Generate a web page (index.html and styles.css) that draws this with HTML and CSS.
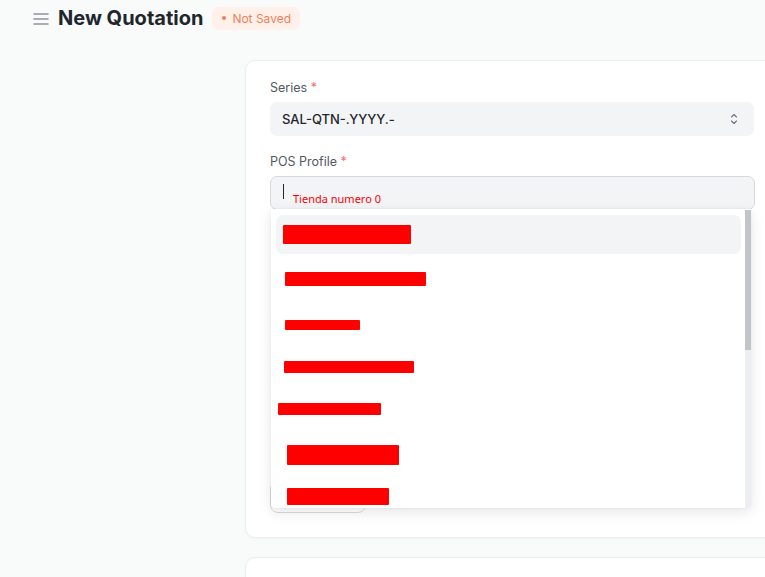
FILE: index.html
```html
<!DOCTYPE html>
<html lang="en">

<head>
    <meta charset="UTF-8">
    <meta name="viewport" content="width=device-width, initial-scale=1.0">
    <title>New Quotation</title>
    <link rel="stylesheet" href="styles.css">
</head>

<body>
    <header class="page-head">
        <svg class="menu-icon" width="16" height="12" viewBox="0 0 16 12">
            <path d="M1 1h14M1 6h14M1 11h14" stroke="#8d949c" stroke-width="1.6" stroke-linecap="round" />
        </svg>
        <h1 class="title">New Quotation</h1>
        <span class="badge"><span class="dot"></span>Not Saved</span>
    </header>

    <div class="page-body">
        <div class="sidebar"></div>
        <main class="main">
            <div class="card">
                <div class="form-group">
                    <label class="label">Series <span class="req">*</span></label>
                    <div class="select">
                        <span>SAL-QTN-.YYYY.-</span>
                        <svg width="10" height="14" viewBox="0 0 10 14">
                            <path d="M2.5 5l2.5-2.5L7.5 5M2.5 9l2.5 2.5L7.5 9" fill="none" stroke="#6b737b" stroke-width="1.1" stroke-linecap="round" stroke-linejoin="round" />
                        </svg>
                    </div>
                </div>

                <div class="form-group link-field">
                    <label class="label">POS Profile <span class="req">*</span></label>
                    <div class="input">
                        <span class="caret"></span>
                        <span class="hint">Tienda numero 0</span>
                    </div>

                    <ul class="dropdown">
                        <li class="item active"><span class="redact" style="width:128px;height:19px"></span></li>
                        <li class="item"><span class="redact" style="width:141px;height:14px;margin-left:2px"></span></li>
                        <li class="item"><span class="redact" style="width:75px;height:10px;margin-left:2px;margin-top:4px"></span></li>
                        <li class="item"><span class="redact" style="width:130px;height:12px;margin-left:1px"></span></li>
                        <li class="item"><span class="redact" style="width:103px;height:12px;margin-left:-5px;margin-top:-4px"></span></li>
                        <li class="item"><span class="redact" style="width:112px;height:20px;margin-left:4px"></span></li>
                        <li class="item"><span class="redact" style="width:102px;height:17px;margin-left:4px;margin-top:-4px"></span></li>
                        <div class="scroll-track"><div class="scroll-thumb"></div></div>
                    </ul>
                </div>

                <div class="hidden-btn"></div>
            </div>

            <div class="card next-card"></div>
        </main>
    </div>
</body>

</html>
```

FILE: styles.css
```css
body {
    margin: 0;
    font-family: Inter, 'Noto Sans', sans-serif;
    background-color: #f9fafa;
    color: #1f272e;
    overflow: hidden;
    height: 577px;
}

.page-head {
    display: flex;
    align-items: center;
    height: 36px;
    padding-left: 33px;
    padding-top: 0;
}

.menu-icon {
    margin-right: 9px;
    margin-top: 1px;
}

.title {
    margin: 0;
    font-size: 20px;
    font-weight: 700;
    color: #1f272e;
}

.badge {
    display: inline-flex;
    align-items: center;
    margin-left: 9px;
    height: 23px;
    padding: 0 9px 0 10px;
    border-radius: 7px;
    background-color: #fff1ea;
    color: #f0805a;
    font-size: 12px;
}

.dot {
    width: 4px;
    height: 4px;
    border-radius: 50%;
    background-color: #f0805a;
    margin-right: 6px;
}

.page-body {
    display: flex;
    padding-top: 24px;
}

.sidebar {
    flex: 0 0 245px;
}

.main {
    flex: 0 0 535px;
}

.card {
    background-color: white;
    border: 1px solid #ececec;
    border-radius: 10px;
    padding: 19px 25px 24px 24px;
    box-shadow: 0 1px 3px rgba(0, 0, 0, 0.03);
}

.next-card {
    margin-top: 19px;
    height: 60px;
}

.form-group {
    margin-bottom: 18px;
}

.label {
    display: block;
    font-size: 12.5px;
    line-height: 16px;
    color: #525a62;
    margin-bottom: 6px;
}

.req {
    color: #f36b6b;
}

.select {
    display: flex;
    align-items: center;
    justify-content: space-between;
    height: 34px;
    padding: 0 15px 0 12px;
    border-radius: 7px;
    background-color: #f3f4f6;
    font-size: 13px;
    font-weight: 500;
    color: #1f272e;
}

.link-field {
    position: relative;
}

.input {
    display: flex;
    align-items: center;
    height: 32px;
    margin-right: -1px;
    padding: 0 12px;
    border: 1px solid #d5d8dc;
    border-radius: 7px;
    background-color: #f3f4f6;
}

.caret {
    width: 1px;
    height: 15px;
    background-color: #1f272e;
    margin-top: -3px;
}

.hint {
    margin-left: 9px;
    margin-top: 10px;
    font-family: 'Noto Sans', sans-serif;
    font-size: 11px;
    color: #ff0000;
}

.dropdown {
    position: absolute;
    top: 55px;
    left: 1px;
    width: 465px;
    height: 293px;
    margin: 0;
    padding: 6px 10px 0 5px;
    list-style: none;
    background-color: white;
    border-radius: 0 0 4px 4px;
    box-shadow: 0 4px 14px rgba(0, 0, 0, 0.10), 0 0 2px rgba(0, 0, 0, 0.08);
    overflow: hidden;
    z-index: 5;
}

.item {
    display: flex;
    align-items: center;
    height: 39px;
    margin-bottom: 5px;
    padding-left: 7px;
    border-radius: 7px;
}

.item.active {
    background-color: #f3f4f6;
}

.redact {
    display: block;
    background-color: #ff0000;
    border-radius: 1px;
}

.scroll-track {
    position: absolute;
    top: 1px;
    right: 0;
    width: 6px;
    bottom: 0;
    background-color: #eceef1;
}

.scroll-thumb {
    height: 140px;
    background-color: #c1c4c9;
}

.hidden-btn {
    margin-top: 271px;
    width: 94px;
    height: 30px;
    border: 1px solid #d8dadd;
    border-radius: 8px;
    background-color: white;
}
```
